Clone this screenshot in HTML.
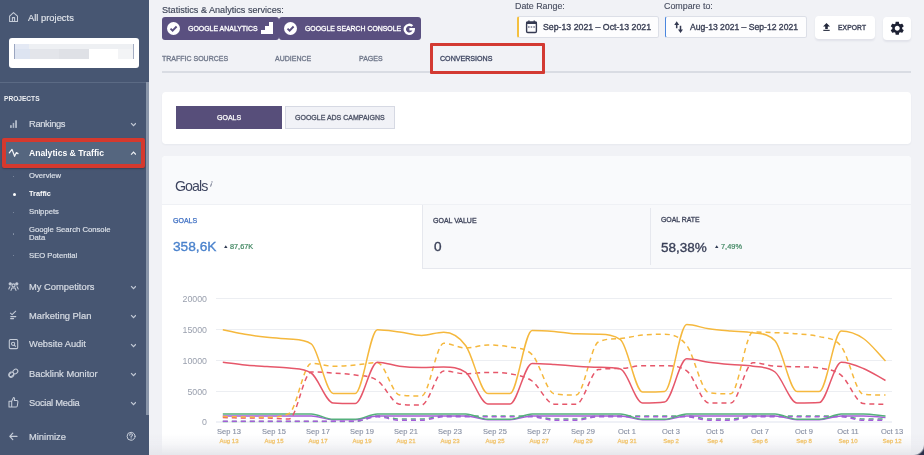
<!DOCTYPE html>
<html><head><meta charset="utf-8">
<style>
*{margin:0;padding:0;box-sizing:border-box}
html,body{width:924px;height:455px;overflow:hidden;background:#f1f2f6;font-family:"Liberation Sans",sans-serif}
.a,.si,.sub,.tab,.xl,.yl{will-change:transform}
.a{position:absolute;white-space:nowrap;line-height:1}
#sb{position:absolute;left:0;top:0;width:149px;height:455px;background:#475672}
.si{position:absolute;left:28.6px;color:#d6dbe3;font-weight:400;-webkit-text-stroke:0.2px #d6dbe3;font-size:9.35px;line-height:1;white-space:nowrap}
.sub{position:absolute;left:28.6px;color:#dde2ea;font-weight:400;-webkit-text-stroke:0.15px #dde2ea;font-size:7.7px;line-height:1;white-space:nowrap}
.chev{position:absolute;left:130px;width:6px;height:5px}
.dot{position:absolute;left:12.8px;width:1.5px;height:1.5px;border-radius:50%;background:#8a96ab}
.tab{position:absolute;top:54.8px;font-size:7px;-webkit-text-stroke:0.3px #6e7689;color:#6e7689;line-height:1;white-space:nowrap}
.xl{position:absolute;top:426.6px;width:60px;text-align:center;font-size:7.5px;line-height:9.3px;color:#868ea2;-webkit-text-stroke:0.12px #868ea2}
.xl span{font-size:6px;font-weight:400;-webkit-text-stroke:0.3px #f5b840;color:#f5b840}
.yl{position:absolute;left:150px;width:57px;text-align:right;font-size:8.8px;line-height:12px;color:#9aa0ae}
</style></head><body>
<div id="sb">
  <!-- home icon -->
      <div class="a" style="left:28.3px;top:13.1px;font-size:9.4px;color:#e3e7ed;-webkit-text-stroke:0.12px #e3e7ed">All projects</div>
  <!-- project box -->
  <div class="a" style="left:8.8px;top:37.7px;width:130.3px;height:29.9px;background:#fff;border-radius:3px"></div>
  <div class="a" style="left:14.4px;top:44.1px;width:119.1px;height:5.3px;background:#eef0f3"></div>
  <div class="a" style="left:14.4px;top:44.1px;width:14.8px;height:5.3px;background:#e4e9f4"></div>
  <div class="a" style="left:14.4px;top:49.4px;width:15.6px;height:10.1px;background:#dde4f1"></div>
  <div class="a" style="left:30px;top:49.4px;width:28.8px;height:10.1px;background:#e3e5ea"></div>
  <div class="a" style="left:58.8px;top:49.4px;width:29.5px;height:10.1px;background:#dfe1e6"></div>
  <div class="a" style="left:117.9px;top:49.4px;width:15.6px;height:10.1px;background:#f3f4f6"></div>
  <div class="a" style="left:14px;top:44.1px;width:1px;height:15.4px;background:#9ba6c0"></div>
  <div class="a" style="left:133px;top:44.1px;width:1px;height:15.4px;background:#a3acc2"></div>
  <div class="a" style="left:0;top:81.5px;width:149px;height:1px;background:#5b6a84"></div>
  <div class="a" style="left:146px;top:82px;width:2.5px;height:333px;background:#8995a9"></div>
  <div class="a" style="left:4.4px;top:95.6px;font-size:6.6px;font-weight:700;color:#eef0f4">PROJECTS</div>

  <!-- Rankings -->
    <div class="si" style="top:120.1px;letter-spacing:-0.35px">Rankings</div>
  <svg class="chev" style="top:122px" viewBox="0 0 5 5"><path d="M0.6 1.2 L3 3.6 L5.4 1.2" fill="none" stroke="#c3cad6" stroke-width="1.2"/></svg>

  <!-- Analytics highlight -->
  <div class="a" style="left:2px;top:138.2px;width:143.3px;height:29.6px;border:4px solid #d5392e;background:#55667f;border-radius:2px;box-shadow:0 1px 1.5px rgba(0,0,0,0.25)"></div>
    <div class="si" style="top:149.4px;color:#fff;font-size:8.6px;font-weight:700;-webkit-text-stroke:0">Analytics &amp; Traffic</div>
  <svg class="chev" style="top:150.5px" viewBox="0 0 5 5"><path d="M0.6 3.6 L3 1.2 L5.4 3.6" fill="none" stroke="#eef1f5" stroke-width="1.2"/></svg>

  <div class="dot" style="top:175.5px"></div>
  <div class="sub" style="top:172.1px">Overview</div>
  <div class="dot" style="top:192.5px;left:12.5px;width:3px;height:3px;background:#fff"></div>
  <div class="sub" style="top:190.1px;color:#fff;font-weight:700;font-size:7.3px;-webkit-text-stroke:0">Traffic</div>
  <div class="dot" style="top:211.5px"></div>
  <div class="sub" style="top:208.4px">Snippets</div>
  <div class="dot" style="top:233px"></div>
  <div class="sub" style="top:225.9px">Google Search Console</div>
  <div class="sub" style="top:234.3px">Data</div>
  <div class="dot" style="top:254.5px"></div>
  <div class="sub" style="top:251.9px">SEO Potential</div>

  <!-- My Competitors -->
    <div class="si" style="top:282.8px">My Competitors</div>
  <svg class="chev" style="top:285px" viewBox="0 0 5 5"><path d="M0.6 1.2 L3 3.6 L5.4 1.2" fill="none" stroke="#c3cad6" stroke-width="1.2"/></svg>

  <!-- Marketing plan -->
    <div class="si" style="top:311.6px">Marketing Plan</div>
  <svg class="chev" style="top:314px" viewBox="0 0 5 5"><path d="M0.6 1.2 L3 3.6 L5.4 1.2" fill="none" stroke="#c3cad6" stroke-width="1.2"/></svg>

  <!-- Website audit -->
    <div class="si" style="top:340.4px">Website Audit</div>
  <svg class="chev" style="top:342.5px" viewBox="0 0 5 5"><path d="M0.6 1.2 L3 3.6 L5.4 1.2" fill="none" stroke="#c3cad6" stroke-width="1.2"/></svg>

  <!-- Backlink -->
    <div class="si" style="top:369.6px">Backlink Monitor</div>
  <svg class="chev" style="top:372px" viewBox="0 0 5 5"><path d="M0.6 1.2 L3 3.6 L5.4 1.2" fill="none" stroke="#c3cad6" stroke-width="1.2"/></svg>

  <!-- Social -->
    <div class="si" style="top:398.6px;letter-spacing:-0.25px">Social Media</div>
  <svg class="chev" style="top:401px" viewBox="0 0 5 5"><path d="M0.6 1.2 L3 3.6 L5.4 1.2" fill="none" stroke="#c3cad6" stroke-width="1.2"/></svg>

  <!-- Minimize -->
    <div class="si" style="top:432.6px">Minimize</div>
    <svg style="position:absolute;left:0;top:0" width="149" height="455" fill="none" stroke="#c5ccd8" stroke-width="1.05" stroke-linecap="round" stroke-linejoin="round">
   <path d="M9.6 21.5 V16.2 L13.5 12.6 L17.5 16.2 V21.5 Z M12.4 21.5 V17.6 H14.6 V21.5"/>
   <g fill="#aeb7c6" stroke="none"><rect x="10" y="125.2" width="1.8" height="2.7"/><rect x="12.7" y="122.9" width="1.5" height="5"/><rect x="15.1" y="120.3" width="1.9" height="7.6"/></g>
   <path d="M9.3 152.8 L12 149.4 L14.6 156.3 L16.4 152.6 L18 153.6" stroke="#f0f2f6" stroke-width="1.25"/>
   <circle cx="13.5" cy="285.4" r="1.5" stroke-width="1.1"/>
   <circle cx="10.2" cy="283.8" r="1.1" fill="#c5ccd8"/><circle cx="16.8" cy="283.8" r="1.1" fill="#c5ccd8"/>
   <path d="M8.8 289 L9.9 286.8 M18.2 289 L17.1 286.8 M11 290.4 L11.9 288 H15.1 L16 290.4"/>
   <path d="M10.4 313.2 L12.1 314.6 L15.7 311.2 M10.8 316.6 H15.8 M10.6 318.6 H13.6"/>
   <rect x="9.3" y="339.5" width="8.4" height="9.1" rx="1.2"/>
   <circle cx="13.1" cy="343.8" r="1.6"/><path d="M14.3 345.1 L15.6 346.3"/>
   <ellipse cx="15.4" cy="371.5" rx="2.6" ry="2.1" transform="rotate(-40 15.4 371.5)"/><path d="M13.6 373.6 A2.6 2.1 -40 1 1 12.9 372.3" transform="rotate(0)"/><ellipse cx="11.5" cy="375" rx="2.6" ry="2.1" transform="rotate(-40 11.5 375)" stroke-dasharray="11 3" stroke-dashoffset="-1"/>
   <path d="M9 401.2 H11.7 V407 H9 Z M11.7 401.2 L13.5 397.6 Q14.8 397.6 14.6 399 L14.3 400.4 H17 Q18.1 400.6 17.9 401.8 L17.3 406 Q17.1 407 16.2 407 H11.7"/>
   <path d="M17 436.4 H9.9 M12.8 433.2 L9.8 436.4 L12.8 439.6" stroke-width="1.2"/>
   <circle cx="131.1" cy="436.3" r="4" stroke-width="1"/>
   <path d="M129.7 435.2 Q129.7 433.7 131.1 433.7 Q132.5 433.7 132.5 435 Q132.5 435.8 131.1 436.5 V437.2"/>
   <circle cx="131.1" cy="438.7" r="0.5" fill="#c5ccd8" stroke="none"/>
  </svg>
</div>

<!-- ======= MAIN ======= -->
<div class="a" style="left:162.2px;top:5.9px;font-size:9.1px;color:#3f4659;-webkit-text-stroke:0.15px #3f4659">Statistics &amp; Analytics services:</div>
<div class="a" style="left:162.2px;top:16.8px;width:116.6px;height:23px;background:#5a5080;border-radius:3px"></div>
<div class="a" style="left:278.6px;top:16.8px;width:142.4px;height:23px;background:#5a5080;border-radius:3px"></div>
<svg class="a" style="left:167px;top:22px" width="13" height="13" viewBox="0 0 13 13"><circle cx="6.5" cy="6.5" r="6.5" fill="#fff"/><path d="M3.5 6.6 L5.6 8.6 L9.6 4.5" fill="none" stroke="#5a5080" stroke-width="1.9"/></svg>
<div class="a" style="left:187.7px;top:25.5px;font-size:6.95px;-webkit-text-stroke:0.3px #fff;color:#fff">GOOGLE ANALYTICS</div>
<svg class="a" style="left:261px;top:22.4px" width="12" height="12" viewBox="0 0 12 12"><path d="M0 12 V8 H4 V4 H8 V0 H12 V12 Z" fill="#fff"/></svg>
<svg class="a" style="left:284.2px;top:22px" width="13" height="13" viewBox="0 0 13 13"><circle cx="6.5" cy="6.5" r="6.5" fill="#fff"/><path d="M3.5 6.6 L5.6 8.6 L9.6 4.5" fill="none" stroke="#5a5080" stroke-width="1.9"/></svg>
<div class="a" style="left:305px;top:25.9px;font-size:6.9px;-webkit-text-stroke:0.3px #fff;color:#fff">GOOGLE SEARCH CONSOLE</div>
<svg class="a" style="left:402.5px;top:22.5px" width="13" height="12" viewBox="0 0 13 12"><path d="M9.4 3 A4.5 4.5 0 1 0 10.8 6.2 H6.4" fill="none" stroke="#fff" stroke-width="2.4"/></svg>

<div class="a" style="left:515.2px;top:1.8px;font-size:8.9px;color:#464c5e;-webkit-text-stroke:0.12px #464c5e">Date Range:</div>
<div class="a" style="left:516.8px;top:15.9px;width:142px;height:21.8px;background:#fdfdfe;border:1px solid #dcdfe7;border-left:2px solid #f4c03f;border-radius:2.5px"></div>
<svg class="a" style="left:0;top:0" width="560" height="40"><rect x="526.6" y="22.2" width="9.8" height="10.3" rx="1.2" fill="none" stroke="#353a52" stroke-width="1.4"/><rect x="526" y="21.5" width="11" height="2.6" rx="1" fill="#353a52"/><rect x="528.3" y="20.4" width="1.2" height="2" fill="#353a52"/><rect x="533.6" y="20.4" width="1.2" height="2" fill="#353a52"/><g fill="#6b6f86"><rect x="528" y="26.3" width="1.6" height="1.4"/><rect x="530.7" y="26.3" width="1.5" height="1.4"/><rect x="533.3" y="26.3" width="1.6" height="1.4"/></g></svg>
<div class="a" style="left:542.5px;top:22.9px;font-size:8.75px;-webkit-text-stroke:0.35px #3b4056;color:#3b4056">Sep-13 2021 – Oct-13 2021</div>

<div class="a" style="left:664.3px;top:2px;font-size:8.9px;color:#464c5e;-webkit-text-stroke:0.12px #464c5e">Compare to:</div>
<div class="a" style="left:664.9px;top:16.1px;width:141.6px;height:21.6px;background:#fdfdfe;border:1px solid #dcdfe7;border-left:1.5px solid #4a86de;border-radius:2.5px"></div>
<svg class="a" style="left:0;top:0" width="700" height="40"><path d="M676.7 24 V28.2 M680.5 25.7 V30" stroke="#353a52" stroke-width="1.5"/><path d="M674.2 25 L676.7 21.2 L679.2 25 Z M678 29.4 L680.5 33 L683 29.4 Z" fill="#353a52"/></svg>
<div class="a" style="left:690px;top:22.9px;font-size:8.6px;-webkit-text-stroke:0.35px #3b4056;color:#3b4056">Aug-13 2021 – Sep-12 2021</div>

<div class="a" style="left:815.3px;top:15.5px;width:59.7px;height:23.1px;background:#fff;border-radius:4px;box-shadow:0 1.5px 2px rgba(40,50,90,0.08)"></div>
<svg class="a" style="left:823.4px;top:23.2px" width="7" height="8" viewBox="0 0 7 8"><path d="M3.5 0 L7 3.6 H4.8 V6 H2.2 V3.6 H0 Z" fill="#23283b"/><rect x="0.3" y="6.8" width="6.4" height="1.1" fill="#23283b"/></svg>
<div class="a" style="left:837.8px;top:24.6px;font-size:6.7px;letter-spacing:0.12px;-webkit-text-stroke:0.35px #3a3f55;color:#3a3f55">EXPORT</div>
<div class="a" style="left:882.9px;top:16.7px;width:28px;height:23px;background:#fff;border-radius:4px;box-shadow:0 1.5px 2px rgba(40,50,90,0.08)"></div>
<svg class="a" style="left:888.6px;top:20px" width="16.5" height="16.5" viewBox="0 0 24 24"><path fill="#1d2133" d="M19.14 12.94c.04-.3.06-.61.06-.94 0-.32-.02-.64-.07-.94l2.03-1.58c.18-.14.23-.41.12-.61l-1.92-3.32c-.12-.22-.37-.29-.59-.22l-2.39.96c-.5-.38-1.03-.7-1.62-.94l-.36-2.54c-.04-.24-.24-.41-.48-.41h-3.84c-.24 0-.43.17-.47.41l-.36 2.54c-.59.24-1.13.57-1.62.94l-2.39-.96c-.22-.08-.47 0-.59.22L2.74 8.87c-.12.21-.08.47.12.61l2.03 1.58c-.05.3-.09.63-.09.94s.02.64.07.94l-2.03 1.58c-.18.14-.23.41-.12.61l1.92 3.32c.12.22.37.29.59.22l2.39-.96c.5.38 1.03.7 1.62.94l.36 2.54c.05.24.24.41.48.41h3.84c.24 0 .44-.17.47-.41l.36-2.54c.59-.24 1.13-.56 1.62-.94l2.39.96c.22.08.47 0 .59-.22l1.92-3.32c.12-.22.07-.47-.12-.61l-2.01-1.58zM12 15.6c-1.98 0-3.6-1.62-3.6-3.6s1.62-3.6 3.6-3.6 3.6 1.62 3.6 3.6-1.62 3.6-3.6 3.6z"/></svg>

<!-- tabs -->
<div class="a" style="left:162px;top:71px;width:749px;height:1.6px;background:#d9dce3"></div>
<div class="tab" style="left:162.1px">TRAFFIC SOURCES</div>
<div class="tab" style="left:275.1px">AUDIENCE</div>
<div class="tab" style="left:358.6px">PAGES</div>
<div class="tab" style="left:439.5px;top:55.6px;color:#3f4762;-webkit-text-stroke:0.3px #3f4762;font-size:7.1px">CONVERSIONS</div>
<div class="a" style="left:430px;top:42.6px;width:115.2px;height:31.2px;border:3px solid #d33a32;border-radius:1px"></div>

<!-- card 1 -->
<div class="a" style="left:162px;top:92px;width:749px;height:51.5px;background:#fff;border-radius:4px;box-shadow:0 1px 2px rgba(40,50,90,0.05)"></div>
<div class="a" style="left:176.1px;top:106.1px;width:106.1px;height:23px;background:#574e7a"></div>
<div class="a" style="left:217.2px;top:114.1px;font-size:7px;-webkit-text-stroke:0.25px #fff;color:#fff">GOALS</div>
<div class="a" style="left:284.9px;top:106.1px;width:109.8px;height:23px;background:#f1f2f7;border:1px solid #d6d9e3"></div>
<div class="a" style="left:295px;top:114.1px;font-size:7px;-webkit-text-stroke:0.3px #4c5266;color:#4c5266">GOOGLE ADS CAMPAIGNS</div>

<!-- card 2 -->
<div class="a" style="left:162px;top:156px;width:749px;height:299px;background:#fff;border-radius:4px 4px 0 0"></div>
<div class="a" style="left:162px;top:156px;width:749px;height:48.5px;background:#f9fafc;border-radius:4px 4px 0 0;border-bottom:1px solid #eff1f5"></div>
<div class="a" style="left:174.6px;top:179px;font-size:14.2px;letter-spacing:-0.95px;color:#3e4560">Goals</div>
<svg class="a" style="left:0;top:0" width="924" height="200"><path d="M210.6 186.6 L211.5 183.4" stroke="#5a6078" stroke-width="0.9"/><circle cx="212" cy="181.9" r="0.55" fill="#5a6078"/></svg>
<div class="a" style="left:422.3px;top:204.5px;width:488.7px;height:64px;background:#f8f9fb;border-left:1px solid #e6e8ee;border-bottom:1px solid #e6e8ee"></div>
<div class="a" style="left:650.4px;top:208px;width:1px;height:57px;background:#e6e8ee"></div>
<div class="a" style="left:172.7px;top:217.3px;font-size:7px;-webkit-text-stroke:0.25px #3d6ec2;color:#3d6ec2">GOALS</div>
<div class="a" style="left:173px;top:240px;font-size:13.7px;-webkit-text-stroke:0.35px #4a82cc;color:#4a82cc">358,6K</div>
<svg class="a" style="left:223.8px;top:245px" width="3.6" height="3.4" viewBox="0 0 5 4"><path d="M0 4 L2.5 0 L5 4Z" fill="#2f3a52"/></svg>
<div class="a" style="left:230.2px;top:243.1px;font-size:7.3px;-webkit-text-stroke:0.2px #3f8660;color:#3f8660">87,67K</div>
<div class="a" style="left:433.2px;top:217.1px;font-size:7px;-webkit-text-stroke:0.3px #40465c;color:#40465c">GOAL VALUE</div>
<div class="a" style="left:433.5px;top:240.4px;font-size:13.6px;-webkit-text-stroke:0.35px #3a4058;color:#3a4058">0</div>
<div class="a" style="left:660.9px;top:217.1px;font-size:6.9px;-webkit-text-stroke:0.3px #40465c;color:#40465c">GOAL RATE</div>
<div class="a" style="left:661px;top:240.5px;font-size:13.5px;-webkit-text-stroke:0.35px #3a4058;color:#3a4058">58,38%</div>
<svg class="a" style="left:714.6px;top:245.2px" width="3.5" height="3.3" viewBox="0 0 5 4"><path d="M0 4 L2.5 0 L5 4Z" fill="#2f3a52"/></svg>
<div class="a" style="left:720.7px;top:243.1px;font-size:7.4px;-webkit-text-stroke:0.2px #3f8660;color:#3f8660">7,49%</div>

<div class="yl" style="top:292.5px">20000</div><div class="yl" style="top:323.5px">15000</div><div class="yl" style="top:354.5px">10000</div><div class="yl" style="top:385.5px">5000</div><div class="yl" style="top:416.0px">0</div>

<svg width="924" height="455" style="position:absolute;left:0;top:0">
 <g stroke="#eceef2" stroke-width="1">
  <line x1="216" y1="298.5" x2="892" y2="298.5"/>
  <line x1="216" y1="329.5" x2="892" y2="329.5"/>
  <line x1="216" y1="360.5" x2="892" y2="360.5"/>
  <line x1="216" y1="391.5" x2="892" y2="391.5"/>
 </g>
 <line x1="216" y1="422" x2="892" y2="422" stroke="#dfe3ee" stroke-width="1"/>
 <g fill="none" stroke-width="1.5" stroke-linejoin="round">
  <path d="M222.8,421.5C230.2,421.5 237.5,421.5 244.9,421.5C252.3,421.5 259.6,421.5 267.0,421.5C274.3,421.5 281.7,421.5 289.1,421.5C296.4,421.5 303.8,421.5 311.2,421.5C318.5,421.5 325.9,421.5 333.2,421.5C340.6,421.5 348.0,421.5 355.3,421.5C362.7,421.5 370.1,416.0 377.4,416.0C384.8,416.0 392.2,419.0 399.5,419.0C406.9,419.0 414.2,419.0 421.6,419.0C429.0,419.0 436.3,416.0 443.7,416.0C451.1,416.0 458.4,416.0 465.8,416.0C473.2,416.0 480.5,416.0 487.9,416.0C495.2,416.0 502.6,416.0 510.0,416.0C517.3,416.0 524.7,416.0 532.1,416.0C539.4,416.0 546.8,419.0 554.2,419.0C561.5,419.0 568.9,419.0 576.2,419.0C583.6,419.0 591.0,416.0 598.3,416.0C605.7,416.0 613.1,416.0 620.4,416.0C627.8,416.0 635.1,416.0 642.5,416.0C649.9,416.0 657.2,416.0 664.6,416.0C672.0,416.0 679.3,416.0 686.7,416.0C694.1,416.0 701.4,419.0 708.8,419.0C716.1,419.0 723.5,419.0 730.9,419.0C738.2,419.0 745.6,416.0 753.0,416.0C760.3,416.0 767.7,416.0 775.0,416.0C782.4,416.0 789.8,416.0 797.1,416.0C804.5,416.0 811.9,416.0 819.2,416.0C826.6,416.0 834.0,416.0 841.3,416.0C848.7,416.0 856.0,419.0 863.4,419.0C870.8,419.0 878.1,419.0 885.5,419.0" stroke="#55b07c" stroke-dasharray="5 4"/>
  <path d="M222.8,421.2C230.2,421.2 237.5,421.2 244.9,421.2C252.3,421.2 259.6,421.2 267.0,421.2C274.3,421.2 281.7,421.2 289.1,421.2C296.4,421.2 303.8,421.2 311.2,421.2C318.5,421.2 325.9,421.2 333.2,421.2C340.6,421.2 348.0,421.2 355.3,421.2C362.7,421.2 370.1,416.8 377.4,416.8C384.8,416.8 392.2,420.2 399.5,420.2C406.9,420.2 414.2,420.2 421.6,420.2C429.0,420.2 436.3,416.8 443.7,416.8C451.1,416.8 458.4,416.8 465.8,416.8C473.2,416.8 480.5,416.8 487.9,416.8C495.2,416.8 502.6,416.8 510.0,416.8C517.3,416.8 524.7,416.8 532.1,416.8C539.4,416.8 546.8,420.2 554.2,420.2C561.5,420.2 568.9,420.2 576.2,420.2C583.6,420.2 591.0,416.8 598.3,416.8C605.7,416.8 613.1,416.8 620.4,416.8C627.8,416.8 635.1,416.8 642.5,416.8C649.9,416.8 657.2,416.8 664.6,416.8C672.0,416.8 679.3,416.8 686.7,416.8C694.1,416.8 701.4,420.2 708.8,420.2C716.1,420.2 723.5,420.2 730.9,420.2C738.2,420.2 745.6,416.8 753.0,416.8C760.3,416.8 767.7,416.8 775.0,416.8C782.4,416.8 789.8,416.8 797.1,416.8C804.5,416.8 811.9,416.8 819.2,416.8C826.6,416.8 834.0,416.8 841.3,416.8C848.7,416.8 856.0,420.2 863.4,420.2C870.8,420.2 878.1,420.2 885.5,420.2" stroke="#a45ed8" stroke-dasharray="5 4"/>
  <path d="M222.8,415.9C230.2,415.9 237.5,415.9 244.9,415.9C252.3,415.9 259.6,415.9 267.0,415.9C274.3,415.9 281.7,415.9 289.1,415.9C296.4,415.9 303.8,415.9 311.2,415.9C318.5,415.9 325.9,419.8 333.2,419.8C340.6,419.8 348.0,419.8 355.3,419.8C362.7,419.8 370.1,415.9 377.4,415.9C384.8,415.9 392.2,415.9 399.5,415.9C406.9,415.9 414.2,415.9 421.6,415.9C429.0,415.9 436.3,415.9 443.7,415.9C451.1,415.9 458.4,415.9 465.8,415.9C473.2,415.9 480.5,419.8 487.9,419.8C495.2,419.8 502.6,419.8 510.0,419.8C517.3,419.8 524.7,415.9 532.1,415.9C539.4,415.9 546.8,415.9 554.2,415.9C561.5,415.9 568.9,415.9 576.2,415.9C583.6,415.9 591.0,415.9 598.3,415.9C605.7,415.9 613.1,415.9 620.4,415.9C627.8,415.9 635.1,419.8 642.5,419.8C649.9,419.8 657.2,419.8 664.6,419.8C672.0,419.8 679.3,415.9 686.7,415.9C694.1,415.9 701.4,415.9 708.8,415.9C716.1,415.9 723.5,415.9 730.9,415.9C738.2,415.9 745.6,415.9 753.0,415.9C760.3,415.9 767.7,415.9 775.0,415.9C782.4,415.9 789.8,419.8 797.1,419.8C804.5,419.8 811.9,419.8 819.2,419.8C826.6,419.8 834.0,415.9 841.3,415.9C848.7,415.9 856.0,415.9 863.4,415.9C870.8,415.9 878.1,417.0 885.5,417.5" stroke="#a45ed8"/>
  <path d="M222.8,414.0C230.2,414.0 237.5,414.0 244.9,414.0C252.3,414.0 259.6,414.0 267.0,414.0C274.3,414.0 281.7,414.0 289.1,414.0C296.4,414.0 303.8,414.0 311.2,414.0C318.5,414.0 325.9,419.3 333.2,419.3C340.6,419.3 348.0,419.3 355.3,419.3C362.7,419.3 370.1,414.0 377.4,414.0C384.8,414.0 392.2,414.0 399.5,414.0C406.9,414.0 414.2,414.0 421.6,414.0C429.0,414.0 436.3,414.0 443.7,414.0C451.1,414.0 458.4,414.0 465.8,414.0C473.2,414.0 480.5,419.3 487.9,419.3C495.2,419.3 502.6,419.3 510.0,419.3C517.3,419.3 524.7,414.0 532.1,414.0C539.4,414.0 546.8,414.0 554.2,414.0C561.5,414.0 568.9,414.0 576.2,414.0C583.6,414.0 591.0,414.0 598.3,414.0C605.7,414.0 613.1,414.0 620.4,414.0C627.8,414.0 635.1,419.3 642.5,419.3C649.9,419.3 657.2,419.3 664.6,419.3C672.0,419.3 679.3,414.0 686.7,414.0C694.1,414.0 701.4,414.0 708.8,414.0C716.1,414.0 723.5,414.0 730.9,414.0C738.2,414.0 745.6,414.0 753.0,414.0C760.3,414.0 767.7,414.0 775.0,414.0C782.4,414.0 789.8,419.3 797.1,419.3C804.5,419.3 811.9,419.3 819.2,419.3C826.6,419.3 834.0,414.0 841.3,414.0C848.7,414.0 856.0,414.0 863.4,414.0C870.8,414.0 878.1,415.3 885.5,416.0" stroke="#55b07c"/>
  <path d="M222.8,417.5C230.2,417.7 237.5,418.0 244.9,418.0C252.3,418.0 259.6,418.0 267.0,418.0C274.3,418.0 281.7,419.0 289.1,419.0C296.4,419.0 303.8,372.0 311.2,372.0C318.5,372.0 325.9,372.5 333.2,373.0C340.6,373.5 348.0,373.8 355.3,375.0C362.7,376.2 370.1,375.6 377.4,380.5C384.8,385.4 392.2,403.4 399.5,404.2C406.9,405.0 414.2,405.0 421.6,405.0C429.0,405.0 436.3,371.0 443.7,371.0C451.1,371.0 458.4,373.8 465.8,373.8C473.2,373.8 480.5,372.4 487.9,372.4C495.2,372.4 502.6,372.4 510.0,373.8C517.3,375.2 524.7,375.9 532.1,381.0C539.4,386.1 546.8,404.2 554.2,404.2C561.5,404.2 568.9,404.2 576.2,404.2C583.6,404.2 591.0,370.7 598.3,369.6C605.7,368.5 613.1,368.6 620.4,368.5C627.8,368.4 635.1,365.7 642.5,365.7C649.9,365.7 657.2,365.7 664.6,365.7C672.0,365.7 679.3,365.7 686.7,370.8C694.1,375.9 701.4,403.0 708.8,403.0C716.1,403.0 723.5,403.0 730.9,403.0C738.2,403.0 745.6,362.7 753.0,362.7C760.3,362.7 767.7,365.7 775.0,366.2C782.4,366.7 789.8,366.6 797.1,366.8C804.5,367.0 811.9,366.8 819.2,368.0C826.6,369.2 834.0,369.5 841.3,375.4C848.7,381.3 856.0,402.8 863.4,403.5C870.8,404.2 878.1,404.2 885.5,404.2" stroke="#e6576a" stroke-dasharray="5 4"/>
  <path d="M222.8,416.5C230.2,416.7 237.5,416.9 244.9,417.0C252.3,417.1 259.6,417.2 267.0,417.2C274.3,417.2 281.7,417.2 289.1,413.5C296.4,409.8 303.8,363.4 311.2,363.4C318.5,363.4 325.9,366.2 333.2,366.2C340.6,366.2 348.0,365.6 355.3,365.0C362.7,364.4 370.1,362.7 377.4,362.7C384.8,362.7 392.2,394.0 399.5,395.0C406.9,396.0 414.2,396.0 421.6,396.0C429.0,396.0 436.3,343.3 443.7,343.3C451.1,343.3 458.4,348.0 465.8,348.0C473.2,348.0 480.5,345.0 487.9,345.0C495.2,345.0 502.6,345.5 510.0,347.0C517.3,348.5 524.7,347.2 532.1,354.6C539.4,362.0 546.8,392.6 554.2,393.8C561.5,395.0 568.9,395.0 576.2,395.0C583.6,395.0 591.0,345.5 598.3,342.0C605.7,338.5 613.1,338.9 620.4,338.5C627.8,338.1 635.1,335.7 642.5,335.0C649.9,334.3 657.2,334.3 664.6,334.3C672.0,334.3 679.3,335.7 686.7,345.4C694.1,355.1 701.4,391.6 708.8,392.7C716.1,393.8 723.5,393.8 730.9,393.8C738.2,393.8 745.6,332.0 753.0,332.0C760.3,332.0 767.7,332.4 775.0,332.7C782.4,333.0 789.8,333.1 797.1,333.8C804.5,334.5 811.9,334.5 819.2,336.6C826.6,338.7 834.0,336.9 841.3,346.5C848.7,356.1 856.0,393.6 863.4,394.3C870.8,395.0 878.1,395.0 885.5,395.0" stroke="#f5b83d" stroke-dasharray="5 4"/>
  <path d="M222.8,362.2C230.2,363.1 237.5,364.3 244.9,365.0C252.3,365.7 259.6,366.1 267.0,366.6C274.3,367.1 281.7,367.1 289.1,368.0C296.4,368.9 303.8,368.1 311.2,373.0C318.5,377.9 325.9,402.5 333.2,403.0C340.6,403.5 348.0,403.5 355.3,403.5C362.7,403.5 370.1,362.2 377.4,362.2C384.8,362.2 392.2,365.3 399.5,366.2C406.9,367.1 414.2,367.4 421.6,367.4C429.0,367.4 436.3,367.0 443.7,367.0C451.1,367.0 458.4,367.0 465.8,372.4C473.2,377.8 480.5,404.0 487.9,404.0C495.2,404.0 502.6,404.0 510.0,404.0C517.3,404.0 524.7,363.4 532.1,363.4C539.4,363.4 546.8,364.0 554.2,364.5C561.5,365.0 568.9,365.7 576.2,366.2C583.6,366.7 591.0,367.2 598.3,367.3C605.7,367.4 613.1,367.3 620.4,369.0C627.8,370.7 635.1,403.0 642.5,403.0C649.9,403.0 657.2,403.0 664.6,402.0C672.0,401.0 679.3,358.8 686.7,358.8C694.1,358.8 701.4,361.2 708.8,362.2C716.1,363.1 723.5,363.8 730.9,364.5C738.2,365.2 745.6,365.0 753.0,366.2C760.3,367.4 767.7,366.3 775.0,372.0C782.4,377.7 789.8,403.0 797.1,403.0C804.5,403.0 811.9,403.0 819.2,402.6C826.6,402.2 834.0,362.2 841.3,362.2C848.7,362.2 856.0,365.4 863.4,368.5C870.8,371.6 878.1,376.5 885.5,380.5" stroke="#e6576a"/>
  <path d="M222.8,329.7C230.2,331.2 237.5,333.0 244.9,334.3C252.3,335.6 259.6,336.5 267.0,337.3C274.3,338.1 281.7,338.4 289.1,339.0C296.4,339.6 303.8,339.0 311.2,343.8C318.5,348.6 325.9,393.4 333.2,393.4C340.6,393.4 348.0,393.4 355.3,393.4C362.7,393.4 370.1,329.7 377.4,329.7C384.8,329.7 392.2,331.1 399.5,332.0C406.9,332.9 414.2,335.4 421.6,335.4C429.0,335.4 436.3,332.3 443.7,332.3C451.1,332.3 458.4,335.5 465.8,345.7C473.2,355.9 480.5,393.5 487.9,393.5C495.2,393.5 502.6,393.5 510.0,393.5C517.3,393.5 524.7,330.4 532.1,330.4C539.4,330.4 546.8,330.9 554.2,331.5C561.5,332.1 568.9,333.6 576.2,333.8C583.6,334.0 591.0,334.1 598.3,334.3C605.7,334.5 613.1,334.3 620.4,339.6C627.8,344.9 635.1,392.0 642.5,392.0C649.9,392.0 657.2,392.0 664.6,391.5C672.0,391.0 679.3,324.6 686.7,324.6C694.1,324.6 701.4,327.7 708.8,328.8C716.1,329.9 723.5,330.4 730.9,331.0C738.2,331.6 745.6,331.4 753.0,332.7C760.3,334.0 767.7,332.8 775.0,340.8C782.4,348.8 789.8,391.5 797.1,391.5C804.5,391.5 811.9,391.5 819.2,391.5C826.6,391.5 834.0,331.0 841.3,331.0C848.7,331.0 856.0,333.5 863.4,338.5C870.8,343.5 878.1,353.5 885.5,361.0" stroke="#f5b83d"/>
 </g>
</svg>
<div class="xl" style="left:199.4px">Sep 13<br><span>Aug 13</span></div><div class="xl" style="left:243.6px">Sep 15<br><span>Aug 15</span></div><div class="xl" style="left:287.8px">Sep 17<br><span>Aug 17</span></div><div class="xl" style="left:331.9px">Sep 19<br><span>Aug 19</span></div><div class="xl" style="left:376.1px">Sep 21<br><span>Aug 21</span></div><div class="xl" style="left:420.3px">Sep 23<br><span>Aug 23</span></div><div class="xl" style="left:464.5px">Sep 25<br><span>Aug 25</span></div><div class="xl" style="left:508.7px">Sep 27<br><span>Aug 27</span></div><div class="xl" style="left:552.8px">Sep 29<br><span>Aug 29</span></div><div class="xl" style="left:597.0px">Oct 1<br><span>Aug 31</span></div><div class="xl" style="left:641.2px">Oct 3<br><span>Sep 2</span></div><div class="xl" style="left:685.4px">Oct 5<br><span>Sep 4</span></div><div class="xl" style="left:729.6px">Oct 7<br><span>Sep 6</span></div><div class="xl" style="left:773.7px">Oct 9<br><span>Sep 8</span></div><div class="xl" style="left:817.9px">Oct 11<br><span>Sep 10</span></div><div class="xl" style="left:862.1px">Oct 13<br><span>Sep 12</span></div>
<div class="a" style="left:149px;top:434px;width:775px;height:21px;background:linear-gradient(rgba(232,233,238,0),rgba(232,233,238,0.35) 45%,rgba(230,231,236,0.8) 85%,#e6e7ec)"></div>
<div class="a" style="left:913px;top:444px;width:11px;height:11px;background:radial-gradient(circle at 0 0,rgba(43,49,75,0) 10.5px,#2b314b 12.5px)"></div>
</body></html>
